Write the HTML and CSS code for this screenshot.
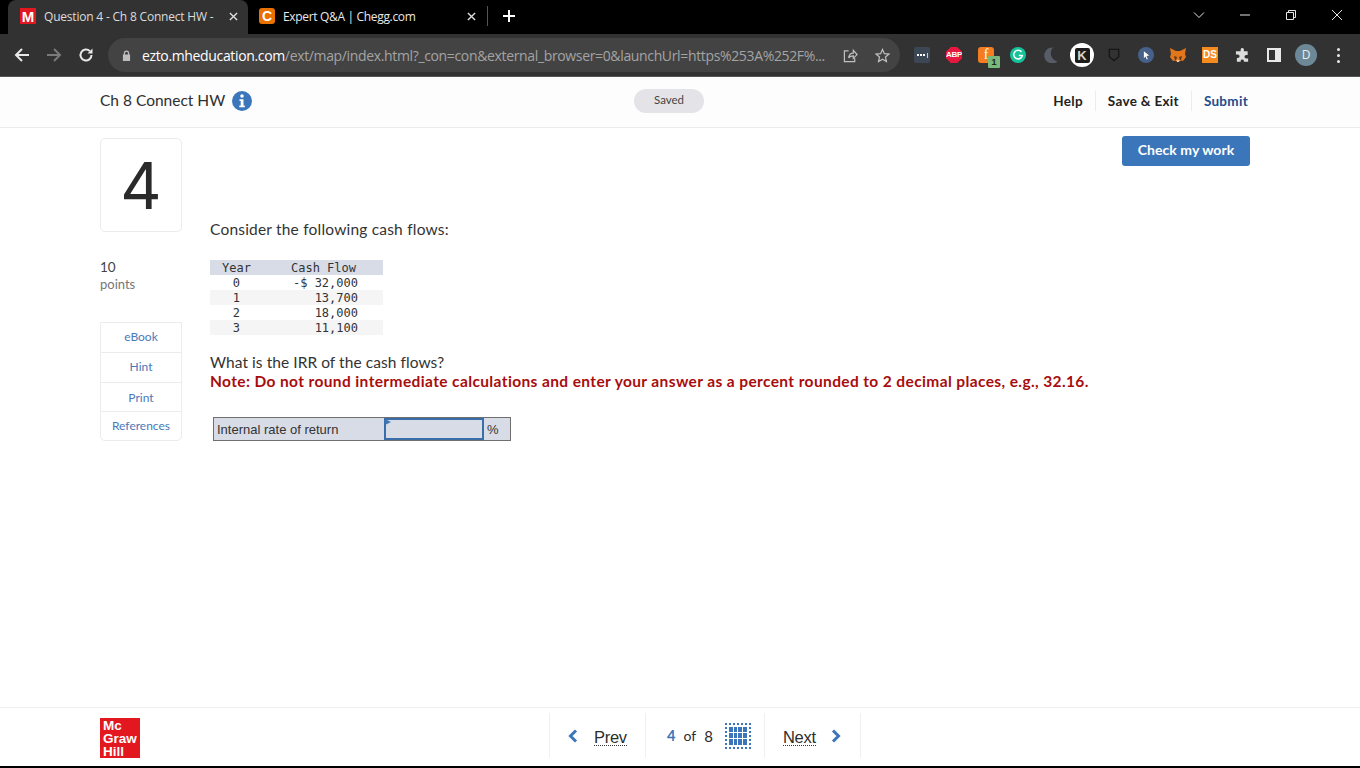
FILE: index.html
```html
<!DOCTYPE html>
<html lang="en">
<head>
<meta charset="utf-8">
<title>Question 4 - Ch 8 Connect HW</title>
<link rel="stylesheet" href="styles.css">
</head>
<body>
<div class="tabstrip">
  <div class="tab active">
    <span class="fav fav-m">M</span>
    <span class="tab-title fade">Question 4 - Ch 8 Connect HW -</span>
    <svg class="tab-x" viewBox="0 0 10 10"><path d="M1 1l8 8M9 1l-8 8"/></svg>
  </div>
  <div class="tab">
    <span class="fav fav-c">C</span>
    <span class="tab-title">Expert Q&amp;A | Chegg.com</span>
    <svg class="tab-x" viewBox="0 0 10 10"><path d="M1 1l8 8M9 1l-8 8"/></svg>
  </div>
  <span class="tab-sep"></span>
  <svg class="newtab" viewBox="0 0 12 12"><path d="M6 0v12M0 6h12"/></svg>
  <div class="winctl">
    <svg viewBox="0 0 12 12"><path d="M1 3.500l5 5 5-5"/></svg>
    <svg viewBox="0 0 12 12"><path d="M1 6h10"/></svg>
    <svg viewBox="0 0 12 12"><path d="M1.500 3.500h7v7h-7zM3.500 3.500v-2h7v7h-2"/></svg>
    <svg viewBox="0 0 12 12"><path d="M1 1l10 10M11 1l-10 10"/></svg>
  </div>
</div>
<div class="toolbar">
  <svg class="nav" viewBox="0 0 16 16"><path d="M15 8H2M8 2L2 8l6 6"/></svg>
  <svg class="nav dim" viewBox="0 0 16 16"><path d="M1 8h13M8 2l6 6-6 6"/></svg>
  <svg class="nav" viewBox="0 0 16 16"><path d="M13.500 8a5.500 5.500 0 1 1-1.600-3.900"/><path class="solid" d="M14.500 1.500v5h-5z"/></svg>
  <div class="omnibox">
    <svg class="lock" viewBox="0 0 10 12"><path d="M2 5V3.500a3 3 0 0 1 6 0V5h1v7H1V5zm1.300 0h3.400V3.500a1.700 1.700 0 0 0-3.400 0z"/></svg>
    <span class="url"><b>ezto.mheducation.com</b>/ext/map/index.html?_con=con&amp;external_browser=0&amp;launchUrl=https%253A%252F%...</span>
    <svg class="omni-ic share" viewBox="0 0 16 16"><path d="M6 3H1.500v11.500h11V11M6 10.500C6.500 7 9 5.500 11 5.500V2.500l4 4.500-4 4V8.300c-2 0-3.800.6-5 2.200z"/></svg>
    <svg class="omni-ic star" viewBox="0 0 16 16"><path d="M8 1.500l2 4.500 4.800.5-3.600 3.200 1 4.800L8 12l-4.200 2.500 1-4.800L1.200 6.500 6 6z"/></svg>
  </div>
  <div class="exts">
    <span class="ext ext-pw"><i></i><i></i><i></i><u></u></span>
    <span class="ext ext-abp">ABP</span>
    <span class="ext ext-f">f<em>1</em></span>
    <svg class="ext ext-g" viewBox="0 0 16 16"><circle class="g-bg" cx="8" cy="8" r="8"/><path class="g-fg" d="M11.500 5A4.300 4.300 0 1 0 12.300 8.500H8.800"/></svg>
    <svg class="ext ext-moon" viewBox="0 0 16 16"><path d="M11 .5a8 8 0 1 0 4.500 14A8.500 8.500 0 0 1 11 .5z"/></svg>
    <span class="ext ext-k"><span>K</span></span>
    <svg class="ext ext-shield" viewBox="0 0 14 16"><path d="M1.500 1.500h11V10L7 14.500 1.500 10z"/></svg>
    <span class="ext ext-cur"><svg viewBox="0 0 8 10"><path d="M1 0l6 5-3 .5 1.500 3.500-1.200.5L2.800 6 1 8z"/></svg></span>
    <svg class="ext ext-fox" viewBox="0 0 16 16"><path class="f1" d="M0 1l6 3h4l6-3-1 6 1 3-3 4-2-.5L8 15l-3-1.500-2 .5-3-4 1-3z"/><path class="f2" d="M4 9l3 1-1 3H5zM12 9l-3 1 1 3h1z"/><path class="f3" d="M6.500 13h3L9 15H7z"/></svg>
    <span class="ext ext-ds">DS</span>
    <svg class="ext ext-puzzle" viewBox="0 0 16 16"><path d="M6 1.500a1.800 1.800 0 0 1 3.500 0V3.500h4v4h-1.500a1.900 1.900 0 0 0 0 3.800H14v3.400H9.500v-1a1.800 1.800 0 0 0-3.500 0v1H2v-4h1a1.900 1.900 0 0 0 0-3.800H1V3.500h5z"/></svg>
    <span class="ext ext-panel"></span>
    <span class="ext ext-avatar">D</span>
    <span class="ext ext-menu"><i></i><i></i><i></i></span>
  </div>
</div>
<header class="apphead">
  <div class="apphead-left">
    <span class="hw-title">Ch 8 Connect HW</span>
    <svg class="info" viewBox="0 0 20 20"><circle cx="10" cy="10" r="10"/><circle class="w" cx="10" cy="5" r="1.800"/><path class="w" d="M7.500 8.300h4v6.200h1.300v1.800H7.300v-1.800h1.400v-4.400H7.500z"/></svg>
  </div>
  <div class="saved">Saved</div>
  <nav class="apphead-right">
    <a class="hlink">Help</a>
    <a class="hlink">Save &amp; Exit</a>
    <a class="hlink submit">Submit</a>
  </nav>
</header>
<main class="content">
  <aside class="side">
    <div class="qnum">4</div>
    <div class="points"><div class="pts-n">10</div><div class="pts-l">points</div></div>
    <ul class="tools">
      <li>eBook</li>
      <li>Hint</li>
      <li>Print</li>
      <li>References</li>
    </ul>
  </aside>
  <section class="question">
    <div class="checkrow"><button class="check">Check my work</button></div>
    <p class="lead">Consider the following cash flows:</p>
    <div class="cash">
      <div class="row head"><span class="c1">Year</span><span class="c2">Cash Flow</span></div>
      <div class="row"><span class="c1 n">0</span><span class="c2 r">-$ 32,000</span></div>
      <div class="row alt"><span class="c1 n">1</span><span class="c2 r">13,700</span></div>
      <div class="row"><span class="c1 n">2</span><span class="c2 r">18,000</span></div>
      <div class="row alt"><span class="c1 n">3</span><span class="c2 r">11,100</span></div>
    </div>
    <p class="ask">What is the IRR of the cash flows?</p>
    <p class="note">Note: Do not round intermediate calculations and enter your answer as a percent rounded to 2 decimal places, e.g., 32.16.</p>
    <div class="answer">
      <div class="a-label">Internal rate of return</div>
      <div class="a-input"><span class="flag"></span></div>
      <div class="a-unit">%</div>
    </div>
  </section>
</main>
<footer class="foot">
  <div class="logo"><span>Mc</span><span>Graw</span><span>Hill</span></div>
  <div class="pager">
    <div class="pg pg-prev">
      <svg class="chev" viewBox="0 0 10 14"><path d="M8 1.500L2.500 7 8 12.500"/></svg>
      <span class="pg-link">Prev</span>
    </div>
    <div class="pg pg-mid">
      <b>4</b><span>of</span><span>8</span>
      <span class="grid-ic"><i></i><i></i><i></i><i></i><i></i><i></i><i></i><i></i><i></i><i></i><i></i><i></i></span>
    </div>
    <div class="pg pg-next">
      <span class="pg-link">Next</span>
      <svg class="chev" viewBox="0 0 10 14"><path d="M2 1.500L7.500 7 2 12.500"/></svg>
    </div>
  </div>
</footer>
</body>
</html>
```
FILE: styles.css
```css
* { box-sizing: border-box; }
html, body { margin: 0; height: 768px; overflow: hidden; }
body { display: flex; flex-direction: column; background: #fff; font-family: Lato, "Liberation Sans", sans-serif; color: #2d2d2d; }

/* browser chrome */
.tabstrip { height: 34px; background: #000; display: flex; align-items: stretch; padding-left: 8px; position: relative; flex: none; }
.tab { width: 240px; display: flex; align-items: center; padding: 0 10px 2px 12px; color: #fff; font: 12px "Open Sans", "Liberation Sans", sans-serif; }
.tab.active { background: #323232; border-radius: 8px 8px 0 0; }
.tab + .tab { width: 240px; padding-left: 11px; padding-right: 12px; }
.fav { width: 16px; height: 16px; flex: none; display: flex; align-items: center; justify-content: center; color: #fff; font-weight: 700; font-family: "Liberation Sans", sans-serif; }
.fav-m { background: #e3171f; font-size: 15px; }
.fav-c { background: #e87100; border-radius: 3px; font-size: 14px; }
.tab-title { margin-left: 8px; flex: 1; white-space: nowrap; overflow: hidden; letter-spacing: -.2px; color: #e8e8e8; }
.tab + .tab .tab-title { letter-spacing: -.33px; }
.tab.active .tab-title { color: #dcdcdc; }
.tab-x { width: 9px; height: 9px; flex: none; fill: none; stroke: #e0e0e0; stroke-width: 1.500; }
.tab-sep { width: 1px; height: 20px; background: #555; align-self: center; margin: 0 0 2px -1px; }
.newtab { width: 12px; height: 12px; align-self: center; margin: 0 0 2px 15px; fill: none; stroke: #fff; stroke-width: 2; }
.winctl { margin-left: auto; display: flex; align-items: center; gap: 34px; padding: 0 17px 5px 0; }
.winctl svg { width: 12px; height: 12px; fill: none; stroke: #e4e4e4; stroke-width: 1; }

.toolbar { height: 43px; background: #323232; border-bottom: 1px solid #555; display: flex; align-items: center; padding: 0 0 0 14px; flex: none; }
.nav { width: 16px; height: 16px; fill: none; stroke: #e8e8e8; stroke-width: 2; margin-right: 16px; flex: none; }
.nav.dim { stroke: #7a7a7a; }
.nav:nth-of-type(3) { margin-right: 14px; }
.nav .solid { fill: #e8e8e8; stroke: none; }
.omnibox { width: 792px; height: 34px; border-radius: 17px; background: #434343; display: flex; align-items: center; padding-left: 14px; flex: none; }
.lock { width: 9px; height: 11px; fill: #bdbdbd; flex: none; }
.url { margin-left: 11px; font: 14px "Open Sans", "Liberation Sans", sans-serif; color: #a3a3a3; white-space: nowrap; width: 701px; letter-spacing: -.35px; flex: none; overflow: hidden; }
.url b { font-weight: 400; color: #fff; }
.omni-ic { width: 15px; height: 15px; fill: none; stroke: #c0c0c0; stroke-width: 1.300; flex: none; }
.star { margin-left: 17px; }
.exts { display: flex; align-items: center; margin-left: 14px; position: relative; flex: 1; height: 100%; }
.ext { flex: none; }
.ext-pw { width: 16px; height: 16px; background: #3b4754; border-radius: 2px; display: flex; align-items: center; justify-content: center; gap: 1px; }
.ext-pw i { width: 2px; height: 2px; background: #fff; }
.ext-pw u { width: 1px; height: 5px; background: #ccc; margin-left: 1px; }
.ext-abp { width: 16px; height: 16px; margin-left: 16px; background: #e8173f; clip-path: polygon(30% 0, 70% 0, 100% 30%, 100% 70%, 70% 100%, 30% 100%, 0 70%, 0 30%); color: #fff; font: 700 8px/16px "Liberation Sans", sans-serif; text-align: center; letter-spacing: -.3px; }
.ext-f { width: 16px; height: 16px; margin-left: 16px; background: #f57c20; border-radius: 3px; color: #fff; font: 14px/15px "Liberation Serif", serif; text-align: center; position: relative; }
.ext-f em { position: absolute; left: 10px; top: 9px; width: 12px; height: 12px; background: #78b878; border-radius: 1px; color: #222; font: 700 9px/12px "Liberation Sans", sans-serif; }
.ext-g { width: 16px; height: 16px; margin-left: 16px; }
.g-bg { fill: #15c39a; }
.g-fg { fill: none; stroke: #fff; stroke-width: 1.500; }
.ext-moon { width: 16px; height: 16px; margin-left: 16px; fill: #585c66; }
.ext-k { width: 24px; height: 24px; margin-left: 12px; border-radius: 50%; background: #fff; display: flex; align-items: center; justify-content: center; }
.ext-k span { width: 15px; height: 15px; border-radius: 2px; background: #1c1c1c; color: #d8d4c4; font: 700 13px/15px "Liberation Sans", sans-serif; text-align: center; }
.ext-shield { width: 12px; height: 16px; margin-left: 14px; fill: none; stroke: #161616; stroke-width: 1.500; }
.ext-cur { width: 16px; height: 16px; margin-left: 18px; border-radius: 50%; background: #47618a; display: flex; align-items: center; justify-content: center; }
.ext-cur svg { width: 7px; height: 9px; fill: #fff; }
.ext-fox { width: 16px; height: 16px; margin-left: 16px; }
.f1 { fill: #e2761b; }
.f2 { fill: #5c3a1e; }
.f3 { fill: #f6c79b; }
.ext-ds { width: 16px; height: 16px; margin-left: 16px; background: #f58a1f; color: #fff; font: 700 10px/16px "Liberation Sans", sans-serif; text-align: center; }
.ext-puzzle { width: 15px; height: 15px; margin-left: 17px; fill: #dcdcdc; }
.ext-panel { width: 14px; height: 14px; margin-left: 17px; border: 2px solid #e8e8e8; border-right-width: 6px; background: #323232; }
.ext-avatar { width: 22px; height: 22px; margin-left: 14px; border-radius: 50%; background: #6d8896; color: #e8eef0; font: 12px/22px "Open Sans", sans-serif; text-align: center; }
.ext-menu { width: 4px; margin-left: 20px; display: flex; flex-direction: column; gap: 3px; }
.ext-menu i { width: 3px; height: 3px; border-radius: 50%; background: #e8e8e8; }

/* assignment header */
.apphead { height: 51px; flex: none; background: #fdfdfd; border-bottom: 1px solid #ececec; display: grid; grid-template-columns: 1fr 70px 1fr; align-items: center; padding: 0 110px 2px 100px; }
.apphead-left { display: flex; align-items: center; gap: 7px; }
.hw-title { font-size: 15.500px; color: #2f2f2f; padding-bottom: 2px; }
.info { width: 20px; height: 20px; fill: #3b76ba; }
.info .w { fill: #fff; }
.saved { width: 70px; height: 24px; background: #e4e4e8; border-radius: 12px; font-size: 11.500px; line-height: 22px; text-align: center; color: #444; margin-left: -6px; }
.apphead-right { display: flex; justify-content: flex-end; align-items: center; }
.hlink { font-size: 13.500px; font-weight: 700; color: #222; padding: 0 12px; height: 20px; line-height: 20px; border-left: 1px solid #ececec; letter-spacing: .3px; }
.hlink:first-child { border-left: 0; }
.hlink.submit { color: #1d4d8c; padding-right: 2px; }

/* question */
.content { flex: 1; display: flex; padding: 0 110px 0 100px; min-height: 0; }
.side { width: 82px; flex: none; padding-top: 10px; }
.qnum { height: 94px; border: 1px solid #ececec; border-radius: 5px; display: flex; align-items: center; justify-content: center; font-family: Inter, Lato, sans-serif; font-size: 64px; font-weight: 400; color: #2a2a2a; }
.points { margin-top: 26px; }
.pts-n { font-size: 13.500px; line-height: 18px; color: #444; }
.pts-l { font-size: 13px; line-height: 16px; color: #777; }
.tools { list-style: none; margin: 30px 0 0; padding: 0; border: 1px solid #ececec; border-radius: 0 0 5px 5px; }
.tools li { height: 30px; line-height: 28px; text-align: center; font-size: 12px; color: #4b78b8; border-top: 1px solid #ececec; }
.tools li:first-child { border-top: 0; height: 29px; }
.tools li:nth-child(3) { line-height: 30px; height: 29px; }
.tools li:last-child { height: 29px; line-height: 27px; }
.question { flex: 1; padding: 8px 0 0 28px; min-width: 0; }
.checkrow { display: flex; justify-content: flex-end; height: 30px; }
.check { width: 128px; height: 30px; border: 0; border-radius: 3px; background: #3b76ba; color: #fff; font: 700 14px Lato, sans-serif; padding: 0 0 3px; letter-spacing: .05px; }
.lead { margin: 53px 0 0; font-size: 15.500px; line-height: 20px; color: #333; letter-spacing: .2px; }
.cash { margin-top: 21px; width: 173px; font: 12px/17px "DejaVu Sans Mono", monospace; color: #333; }
.row { display: flex; height: 15px; white-space: pre; }
.row.head { background: #d8dce6; }
.row.alt { background: #f5f5f5; }
.c1 { width: 41px; text-align: right; }
.c1.n { width: 30px; }
.c2 { flex: 1; padding-left: 40px; }
.c2.r { text-align: right; padding: 0 25px 0 0; }
.ask { margin: 18px 0 0; font-size: 15.500px; line-height: 19px; color: #333; letter-spacing: .06px; }
.note { margin: 0; font-size: 15.500px; line-height: 18px; font-weight: 700; color: #a80d0d; letter-spacing: .38px; white-space: nowrap; }
.answer { margin: 27px 0 0 3px; display: flex; width: 298px; height: 24px; border: 1px solid #6f6f6f; background: #d8dce6; font: 13px/23px "Liberation Sans", sans-serif; color: #333; }
.a-label { width: 170px; padding-left: 3px; }
.a-input { width: 100px; position: relative; border: 2px solid #3a6ea8; }
.flag { position: absolute; left: -1px; top: -1px; width: 0; height: 0; border-left: 6px solid #3b76ba; border-top: 3px solid transparent; border-bottom: 3px solid transparent; }
.a-unit { flex: 1; padding-left: 3px; }

/* footer */
.foot { height: 61px; flex: none; border-top: 1px solid #f0f0f0; border-bottom: 2px solid #000; display: flex; padding: 10px 0 0 100px; }
.logo { width: 40px; height: 40px; background: #e3171f; color: #fff; font: 700 13.500px/13px "Liberation Sans", sans-serif; padding: 1px 0 0 3px; display: flex; flex-direction: column; }
.pager { display: flex; height: 45px; margin: -5px 0 0 409px; }
.pg { display: flex; align-items: center; border-left: 1px solid #f0f0f0; font-size: 15px; color: #2d2d2d; }
.pg-prev { width: 96px; padding-left: 18px; }
.pg-mid { width: 119px; padding-left: 21px; }
.pg-mid b { color: #3b76ba; font-size: 14.500px; }
.pg-mid span { margin-left: 8px; font-size: 14px; }
.pg-mid span:nth-of-type(2) { font-size: 15px; }
.pg-next { width: 97px; padding-left: 18px; border-right: 1px solid #f0f0f0; }
.chev { width: 10px; height: 14px; fill: none; stroke: #3b76ba; stroke-width: 3; flex: none; }
.pg-link { font: 16.500px "Liberation Sans", sans-serif; border-bottom: 1px dotted #333; line-height: 15px; letter-spacing: -.3px; margin-top: 4px; }
.pg-prev .pg-link { margin-left: 16px; }
.pg-next .chev { margin-left: 15px; }
.pg .grid-ic { width: 26px; height: 26px; margin-left: 12px; border: 2px dotted #3b76ba; padding: 2px; display: grid; grid-template-columns: repeat(4, 1fr); grid-template-rows: repeat(3, 1fr); gap: 1px; }
.grid-ic i { background: #3b76ba; }
```
